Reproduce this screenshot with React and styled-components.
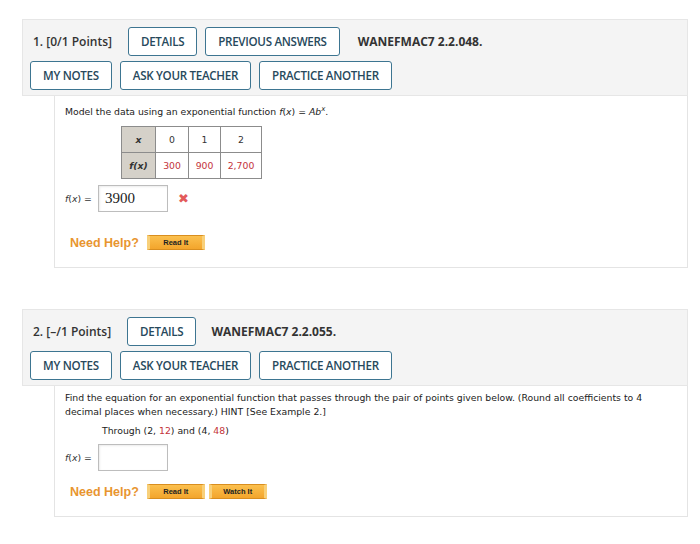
import React from "react";
import styled, { createGlobalStyle } from "styled-components";

const GlobalStyle = createGlobalStyle`
  body {
    margin: 0;
    background: #ffffff;
    font-family: "DejaVu Sans", Verdana, sans-serif;
  }
`;

const Page = styled.div`
  width: 700px;
  padding: 19px 12px 20px 22px;
  box-sizing: border-box;
  display: flex;
  flex-direction: column;
  gap: 41px;
`;

const Question = styled.section`
  display: flex;
  flex-direction: column;
`;

const Header = styled.div`
  background: #f4f4f4;
  border: 1px solid #e6e6e6;
  padding: 7px 7px 5px 7px;
  display: flex;
  flex-direction: column;
  gap: 5px;
  font-family: "Open Sans", sans-serif;
`;

const HeaderRow = styled.div`
  display: flex;
  align-items: center;
  gap: 8px;
`;

const Points = styled.span`
  font-size: 12px;
  font-weight: 600;
  color: #333;
  margin-left: 3px;
  margin-right: 8px;
`;

const Code = styled.span`
  font-size: 12px;
  font-weight: 700;
  color: #333;
  margin-left: ${(p) => p.$gap || 10}px;
`;

const Btn = styled.button`
  height: 29px;
  padding: 0 12px;
  background: #fff;
  border: 1.5px solid #3d7591;
  border-radius: 3px;
  font-family: "Open Sans", sans-serif;
  font-size: 11.6px;
  font-weight: 600;
  color: #27495c;
  letter-spacing: -0.3px;
`;

const Body = styled.div`
  margin-left: 32px;
  background: #fff;
  border: 1px solid #e4e4e4;
  border-top: none;
  padding: ${(p) => p.$pad || "8px 10px 17px 10px"};
  display: flex;
  flex-direction: column;
  align-items: flex-start;
  font-size: 9.3px;
  color: #222;
`;

const Prompt = styled.p`
  margin: 0;
  line-height: ${(p) => p.$lh || 15}px;

  sup {
    line-height: 0;
    font-size: 7px;
  }
`;

const Italic = styled.i``;

const DataTable = styled.table`
  border-collapse: collapse;
  margin: 7px 0 0 56px;
  font-size: 9.3px;
`;

const Cell = styled.td`
  border: 1px solid #8c8c8c;
  height: 26px;
  width: ${(p) => p.$w || 30}px;
  box-sizing: border-box;
  text-align: center;
  padding: 0;
  background: ${(p) => (p.$head ? "#d5d1c9" : "#fff")};
  color: ${(p) => (p.$red ? "#c4333a" : "#333")};
  font-weight: ${(p) => (p.$head ? 700 : 400)};
  font-style: ${(p) => (p.$head ? "italic" : "normal")};
`;

const AnswerRow = styled.div`
  display: flex;
  align-items: center;
  margin-top: ${(p) => p.$top || 6}px;
`;

const Label = styled.span`
  color: #333;
  width: 33px;
`;

const Input = styled.div`
  width: 70px;
  height: 27px;
  box-sizing: border-box;
  border: 1px solid #bdbdbd;
  box-shadow: inset 1px 1px 2px rgba(0, 0, 0, 0.08);
  font-family: "Liberation Serif", serif;
  font-size: 15px;
  color: #222;
  padding-left: 6px;
  display: flex;
  align-items: center;
`;

const Wrong = styled.span`
  color: #e35b5b;
  font-size: 13px;
  margin-left: 10px;
`;

const Help = styled.div`
  display: flex;
  align-items: center;
  gap: 4px;
  margin-top: ${(p) => p.$top || 23}px;
  margin-left: 5px;
`;

const HelpText = styled.span`
  font-family: "Liberation Sans", Arial, sans-serif;
  font-weight: 700;
  font-size: 12.5px;
  color: #e8952f;
  margin-right: 4px;
`;

const HelpBtn = styled.span`
  width: ${(p) => p.$w || 58}px;
  height: 15px;
  box-sizing: border-box;
  display: flex;
  align-items: center;
  justify-content: center;
  background: linear-gradient(#fbc04e, #f3a52c);
  border: 1px solid #d98e1f;
  border-left: 3px solid #f8d07a;
  border-right: 3px solid #f8d07a;
  font-family: "Liberation Sans", Arial, sans-serif;
  font-weight: 700;
  font-size: 7.5px;
  color: #222;
`;

const Through = styled.p`
  margin: 5px 0 0 37px;
  line-height: 14px;
`;

const Red = styled.span`
  color: #c4333a;
`;

export default function App() {
  return (
    <>
      <GlobalStyle />
      <Page>
        <Question>
          <Header>
            <HeaderRow>
              <Points>1. [0/1 Points]</Points>
              <Btn>DETAILS</Btn>
              <Btn>PREVIOUS ANSWERS</Btn>
              <Code $gap={10}>WANEFMAC7 2.2.048.</Code>
            </HeaderRow>
            <HeaderRow>
              <Btn>MY NOTES</Btn>
              <Btn>ASK YOUR TEACHER</Btn>
              <Btn>PRACTICE ANOTHER</Btn>
            </HeaderRow>
          </Header>
          <Body>
            <Prompt>
              Model the data using an exponential function <Italic>f</Italic>(<Italic>x</Italic>) = <Italic>Ab</Italic>
              <sup>
                <Italic>x</Italic>
              </sup>
              .
            </Prompt>
            <DataTable>
              <tbody>
                <tr>
                  <Cell $head $w={34}>x</Cell>
                  <Cell $w={33}>0</Cell>
                  <Cell $w={32}>1</Cell>
                  <Cell $w={41}>2</Cell>
                </tr>
                <tr>
                  <Cell $head $w={34}>f(x)</Cell>
                  <Cell $red $w={33}>300</Cell>
                  <Cell $red $w={32}>900</Cell>
                  <Cell $red $w={41}>2,700</Cell>
                </tr>
              </tbody>
            </DataTable>
            <AnswerRow>
              <Label>
                <Italic>f</Italic>(<Italic>x</Italic>) =
              </Label>
              <Input>3900</Input>
              <Wrong>✖</Wrong>
            </AnswerRow>
            <Help>
              <HelpText>Need Help?</HelpText>
              <HelpBtn>Read It</HelpBtn>
            </Help>
          </Body>
        </Question>

        <Question>
          <Header>
            <HeaderRow>
              <Points>2. [–/1 Points]</Points>
              <Btn>DETAILS</Btn>
              <Code $gap={7}>WANEFMAC7 2.2.055.</Code>
            </HeaderRow>
            <HeaderRow>
              <Btn>MY NOTES</Btn>
              <Btn>ASK YOUR TEACHER</Btn>
              <Btn>PRACTICE ANOTHER</Btn>
            </HeaderRow>
          </Header>
          <Body $pad="5px 10px 17px 10px">
            <Prompt $lh={14}>
              Find the equation for an exponential function that passes through the pair of points given below. (Round all
              coefficients to 4 decimal places when necessary.) HINT [See Example 2.]
            </Prompt>
            <Through>
              Through (2, <Red>12</Red>) and (4, <Red>48</Red>)
            </Through>
            <AnswerRow $top={6}>
              <Label>
                <Italic>f</Italic>(<Italic>x</Italic>) =
              </Label>
              <Input />
            </AnswerRow>
            <Help $top={13}>
              <HelpText>Need Help?</HelpText>
              <HelpBtn>Read It</HelpBtn>
              <HelpBtn>Watch It</HelpBtn>
            </Help>
          </Body>
        </Question>
      </Page>
    </>
  );
}
